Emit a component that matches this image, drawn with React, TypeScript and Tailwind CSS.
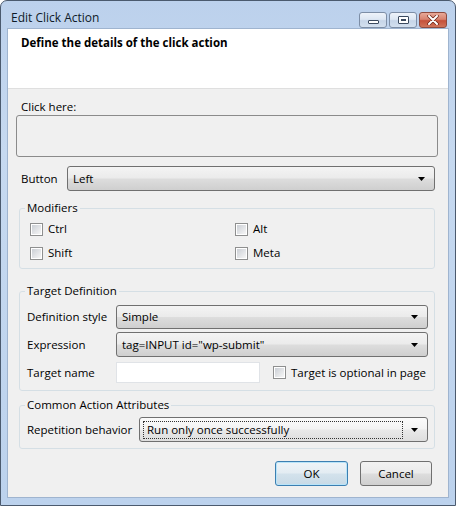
import React from "react";

const Arrow = () => (
  <svg width="7" height="4" viewBox="0 0 7 4" className="shrink-0">
    <path d="M0 0h7L3.5 4z" fill="#000" />
  </svg>
);

const Select = ({
  value,
  className = "",
  focused = false,
}: {
  value: string;
  className?: string;
  focused?: boolean;
}) => (
  <div
    className={`flex items-center justify-between rounded-[3px] border border-[#707070] pl-[5px] pr-[9px] ${
      focused
        ? "bg-[linear-gradient(to_bottom,#fbfbfb_0%,#f3f3f3_48%,#e9e9e9_52%,#dedede_100%)]"
        : "bg-[linear-gradient(to_bottom,#f4f4f4_0%,#ebebeb_48%,#dddddd_52%,#cfcfcf_100%)]"
    } ${className}`}
  >
    {focused ? (
      <span className="flex-1 mr-[8px] h-[18px] flex items-center border border-dotted border-[#333] pl-[3px] -ml-[2px]">
        {value}
      </span>
    ) : (
      <span>{value}</span>
    )}
    <Arrow />
  </div>
);

const Check = ({ label }: { label: string }) => (
  <div className="flex items-center h-[16px]">
    <span className="w-[13px] h-[13px] border border-[#8e8f8f] p-[1px] bg-white">
      <span className="block w-full h-full bg-[linear-gradient(135deg,#cbcfd5_0%,#f6f6f6_100%)]" />
    </span>
    <span className="ml-[5px]">{label}</span>
  </div>
);

const Group = ({
  title,
  className = "",
  children,
}: {
  title: string;
  className?: string;
  children: React.ReactNode;
}) => (
  <fieldset className={`ml-[11px] mr-[13px] border border-[#d5dfe5] rounded-[3px] ${className}`}>
    <legend className="ml-[5px] px-[2px] leading-[16px]">{title}</legend>
    {children}
  </fieldset>
);

const CaptionButton = ({
  children,
  close = false,
}: {
  children: React.ReactNode;
  close?: boolean;
}) => (
  <div
    className={`w-[28px] h-[16px] rounded-[3px] border flex items-center justify-center ${
      close
        ? "border-[#8d4a3f] bg-[linear-gradient(to_bottom,#e8a998_0%,#d7826f_45%,#c5503a_55%,#d0745a_100%)]"
        : "border-[#7d8ea6] bg-[linear-gradient(to_bottom,#eef3fa_0%,#dde7f3_45%,#c6d5e8_55%,#d3e0ef_100%)]"
    }`}
  >
    {children}
  </div>
);

export default function App() {
  return (
    <div className="w-[456px] h-[506px] flex flex-col border border-[#4b5a6e] rounded-t-[7px] bg-[linear-gradient(to_bottom,#bcd1ec_0%,#c6d9f0_30%,#bcd2ed_100%)] font-['Open_Sans',sans-serif] text-[11.5px] text-[#000] px-[6px] pb-[7px] overflow-hidden">
      <div className="h-[27px] shrink-0 flex items-center pl-[4px] pr-[1px]">
        <span className="text-[12px] text-[#0f1a28] mt-[7px]">Edit Click Action</span>
        <div className="ml-auto flex gap-[2px] mt-[10px] mr-[1px]">
          <CaptionButton>
            <span className="w-[11px] h-[4px] mt-[5px] border border-[#3b4a5f] bg-white rounded-[1px]" />
          </CaptionButton>
          <CaptionButton>
            <span className="w-[11px] h-[8px] border border-[#3b4a5f] bg-white rounded-[1px] flex items-center justify-center">
              <span className="w-[5px] h-[2px] border border-[#3b4a5f]" />
            </span>
          </CaptionButton>
          <CaptionButton close>
            <svg width="12" height="10" viewBox="0 0 12 10">
              <path d="M2 1l8 8M10 1L2 9" stroke="#6b2417" strokeWidth="3.4" strokeLinecap="round" />
              <path d="M2 1l8 8M10 1L2 9" stroke="#fff" strokeWidth="2" strokeLinecap="round" />
            </svg>
          </CaptionButton>
        </div>
      </div>

      <div className="flex-1 flex flex-col border border-[#9fb4cf] bg-[#f0f0f0]">
        <div className="h-[60px] shrink-0 bg-white border-b border-[#dfdfdf] pl-[13px] pt-[5px]">
          <span className="font-bold">Define the details of the click action</span>
        </div>

        <div className="pl-[13px] mt-[10px] leading-[16px]">Click here:</div>
        <div className="ml-[8px] mr-[10px] h-[42px] rounded-[3px] border border-[#8b8b8b] bg-[#f0f0f0]" />

        <div className="mt-[9px] flex items-center pl-[13px] mr-[13px]">
          <span className="w-[46px]">Button</span>
          <Select value="Left" className="flex-1 h-[25px]" />
        </div>

        <Group title="Modifiers" className="mt-[9px]">
          <div className="grid grid-cols-[205px_1fr] gap-y-[8px] mt-[5px] pl-[10px] pb-[7px]">
            <Check label="Ctrl" />
            <Check label="Alt" />
            <Check label="Shift" />
            <Check label="Meta" />
          </div>
        </Group>

        <Group title="Target Definition" className="mt-[14px]">
          <div className="pl-[7px] pr-[6px] pb-[7px]">
            <div className="flex items-center mt-[6px]">
              <span className="w-[89px]">Definition style</span>
              <Select value="Simple" className="flex-1 h-[24px]" />
            </div>
            <div className="flex items-center mt-[3px]">
              <span className="w-[89px]">Expression</span>
              <Select value={'tag=INPUT id="wp-submit"'} className="flex-1 h-[25px]" />
            </div>
            <div className="flex items-center mt-[5px]">
              <span className="w-[89px]">Target name</span>
              <div className="w-[144px] h-[21px] bg-white border border-[#e0e3e7]" />
              <span className="ml-[13px]">
                <Check label="Target is optional in page" />
              </span>
            </div>
          </div>
        </Group>

        <Group title="Common Action Attributes" className="mt-[6px]">
          <div className="flex items-center mt-[4px] pl-[7px] pr-[6px] pb-[6px]">
            <span className="w-[112px]">Repetition behavior</span>
            <Select value="Run only once successfully" focused className="flex-1 h-[25px]" />
          </div>
        </Group>

        <div className="mt-[12px] flex justify-end gap-[12px] pr-[16px]">
          <button className="w-[73px] h-[25px] rounded-[3px] border border-[#3c7fb1] bg-[linear-gradient(to_bottom,#eef4f8_0%,#e3ecf2_48%,#d3e2ec_52%,#c8dae6_100%)] shadow-[inset_0_0_0_1px_#b8e4f9]">
            OK
          </button>
          <button className="w-[72px] h-[25px] rounded-[3px] border border-[#707070] bg-[linear-gradient(to_bottom,#f2f2f2_0%,#ebebeb_48%,#dddddd_52%,#cfcfcf_100%)]">
            Cancel
          </button>
        </div>
      </div>
    </div>
  );
}
